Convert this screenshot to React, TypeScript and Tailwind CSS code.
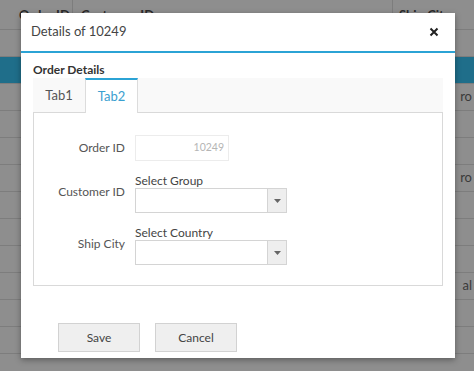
export default function App() {
  const rows = [
    { sel: false, right: "" },
    { sel: true, right: "" },
    { sel: false, right: "ro" },
    { sel: false, right: "" },
    { sel: false, right: "" },
    { sel: false, right: "ro" },
    { sel: false, right: "" },
    { sel: false, right: "" },
    { sel: false, right: "" },
    { sel: false, right: "al" },
    { sel: false, right: "" },
    { sel: false, right: "" },
  ];

  return (
    <div
      className="relative w-[474px] h-[371px] overflow-hidden bg-[#8e8e8e] text-[#333]"
      style={{ fontFamily: "Lato, 'Open Sans', sans-serif" }}
    >
      {/* ── GRID BEHIND OVERLAY ───────────────────────── */}
      <div className="flex flex-col">
        <div className="flex h-[30px] border-b border-[#7d7d7d] text-[13px] font-bold text-[#2a2a2a] whitespace-nowrap">
          <div className="w-[73px] pl-[19px] pt-[6px] border-r border-[#7d7d7d]">Order ID</div>
          <div className="w-[320px] pl-[8px] pt-[6px] border-r border-[#7d7d7d]">Customer ID</div>
          <div className="flex-1 pl-[6px] pt-[6px]">Ship City</div>
        </div>
        {rows.map((r, i) => (
          <div
            key={i}
            className={
              r.sel
                ? "h-[27px] shrink-0 bg-[#1f6e8a] border-b border-[#7d7d7d]"
                : "h-[27px] shrink-0 border-b border-[#7d7d7d] flex items-center justify-end pr-[2px] text-[13px] text-[#3a3a3a]"
            }
          >
            {r.right}
          </div>
        ))}
      </div>

      {/* ── DIALOG ────────────────────────────────────── */}
      <div className="absolute left-[21px] top-[13px] w-[434px] h-[345px] bg-white shadow-[0_2px_6px_rgba(0,0,0,0.35)] flex flex-col">
        <div className="h-[40px] flex items-center justify-between pl-[10px] pr-[16px] border-b-2 border-[#2ba3d5]">
          <span className="text-[13px] text-[#444]">Details of 10249</span>
          <svg width="10" height="10" viewBox="0 0 10 10">
            <path d="M1.5 1.5 L8.5 8.5 M8.5 1.5 L1.5 8.5" stroke="#222" strokeWidth="2" />
          </svg>
        </div>

        <div className="px-[12px] pt-[9px]">
          <div className="text-[12px] font-bold text-[#333] leading-[16px]">Order Details</div>

          {/* tabs */}
          <div className="h-[34px] bg-[#f9f9f9] flex items-end">
            <div className="w-[52px] h-[33px] flex items-center justify-center text-[13px] text-[#555]">Tab1</div>
            <div className="w-[53px] h-[35px] bg-white border-t-2 border-[#2ba3d5] border-x border-x-[#dcdcdc] flex items-center justify-center text-[13px] text-[#3aa0d0] -mb-px relative">
              Tab2
            </div>
          </div>

          {/* panel */}
          <div className="h-[174px] border border-[#d9d9d9] pt-[22px]">
            <div className="flex items-center h-[26px]">
              <div className="w-[91px] text-right text-[12px] text-[#555]">Order ID</div>
              <div className="ml-[10px] w-[94px] h-[26px] border border-[#ececec] flex items-center justify-end pr-[4px] text-[10.5px] text-[#b5b5b5]">
                10249
              </div>
            </div>

            <div className="flex items-start mt-[12px]">
              <div className="w-[91px] text-right text-[12px] text-[#555] leading-[16px] mt-[11px]">Customer ID</div>
              <div className="ml-[10px] flex flex-col">
                <div className="text-[12px] text-[#444] leading-[15px]">Select Group</div>
                <div className="w-[152px] h-[25px] border border-[#d4d4d4] flex">
                  <div className="flex-1" />
                  <div className="w-[19px] bg-[#eeeeee] border-l border-[#d4d4d4] flex items-center justify-center">
                    <svg width="7" height="4" viewBox="0 0 7 4">
                      <path d="M0 0 H7 L3.5 4 Z" fill="#666" />
                    </svg>
                  </div>
                </div>
              </div>
            </div>

            <div className="flex items-start mt-[12px]">
              <div className="w-[91px] text-right text-[12px] text-[#555] leading-[16px] mt-[11px]">Ship City</div>
              <div className="ml-[10px] flex flex-col">
                <div className="text-[12px] text-[#444] leading-[15px]">Select Country</div>
                <div className="w-[152px] h-[25px] border border-[#d4d4d4] flex">
                  <div className="flex-1" />
                  <div className="w-[19px] bg-[#eeeeee] border-l border-[#d4d4d4] flex items-center justify-center">
                    <svg width="7" height="4" viewBox="0 0 7 4">
                      <path d="M0 0 H7 L3.5 4 Z" fill="#666" />
                    </svg>
                  </div>
                </div>
              </div>
            </div>
          </div>

          {/* buttons */}
          <div className="flex gap-[15px] pl-[25px] mt-[37px]">
            <button className="w-[82px] h-[29px] bg-[#efefef] border border-[#d2d2d2] text-[12px] text-[#444]">Save</button>
            <button className="w-[82px] h-[29px] bg-[#efefef] border border-[#d2d2d2] text-[12px] text-[#444]">Cancel</button>
          </div>
        </div>
      </div>
    </div>
  );
}
